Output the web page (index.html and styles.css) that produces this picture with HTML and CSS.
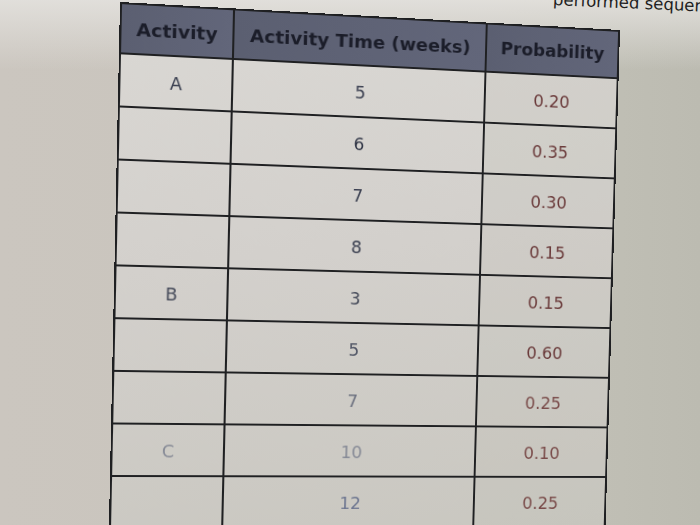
FILE: index.html
```html
<!DOCTYPE html>
<html>
<head>
<meta charset="utf-8">
<link rel="stylesheet" href="styles.css">
</head>
<body>
<div class="caption"><span>performed sequentially</span></div>
<div class="sheet">
  <table class="grid">
    <thead>
      <tr>
        <th class="c1">Activity</th>
        <th class="c2">Activity Time (weeks)</th>
        <th class="c3">Probability</th>
      </tr>
    </thead>
    <tbody>
      <tr class="r1"><td>A</td><td>5</td><td class="p">0.20</td></tr>
      <tr class="r2"><td></td><td>6</td><td class="p">0.35</td></tr>
      <tr class="r3"><td></td><td>7</td><td class="p">0.30</td></tr>
      <tr class="r4"><td></td><td>8</td><td class="p">0.15</td></tr>
      <tr class="r5"><td>B</td><td>3</td><td class="p">0.15</td></tr>
      <tr class="r6"><td></td><td>5</td><td class="p">0.60</td></tr>
      <tr class="r7"><td></td><td>7</td><td class="p">0.25</td></tr>
      <tr class="r8"><td>C</td><td>10</td><td class="p">0.10</td></tr>
      <tr class="r9"><td></td><td>12</td><td class="p">0.25</td></tr>
    </tbody>
  </table>
</div>
</body>
</html>
```
FILE: styles.css
```css
html, body {
  margin: 0;
  padding: 0;
}
body {
  width: 700px;
  height: 525px;
  overflow: hidden;
  font-family: "DejaVu Sans", Verdana, sans-serif;
  background:
    linear-gradient(to bottom, rgba(226,224,220,0.95) 0px, rgba(226,224,220,0) 70px),
    linear-gradient(to right, #cbc6bf 0%, #c8c4bc 55%, #c0bfb5 85%, #bcbbb1 100%);
}
.caption {
  height: 14px;
  margin-bottom: -12px;
  padding-left: 553px;
  overflow: hidden;
  white-space: nowrap;
  font-size: 16.5px;
  line-height: 20px;
  color: #1e1e22;
}
.caption span {
  display: block;
  margin-top: -10px;
  transform-origin: 0 50%;
  transform: rotate(2.5deg);
}
.sheet {
  margin-left: 120px;
  width: 500px;
  transform-origin: 0 0 0;
  transform: matrix3d(1.0603856, 0.0593816, 0, 0.000120771, -0.0212131, 1.005499, 0, 0.00001604, 0, 0, 1, 0, 0, 0, 0, 1);
}
.grid {
  width: 500px;
  border-collapse: collapse;
  table-layout: fixed;
  background: linear-gradient(172deg, #dad8d4 0%, #d3d0cc 45%, #c9c7c0 100%);
}
.grid th, .grid td {
  border: 2px solid #1f2022;
  text-align: center;
  vertical-align: middle;
  padding: 0;
}
.grid th {
  height: 48px;
  font-size: 18px;
  font-weight: bold;
  color: #1b1d29;
  background: linear-gradient(to right, #5b5f71, #62667a);
}
.grid .c1 { width: 21.5%; }
.grid .c2 { width: 50.9%; }
.grid .c3 { width: 27.6%; }
.grid th.c3 { font-size: 17.5px; }
.grid td {
  height: 48px;
  padding-top: 3px;
  font-size: 17px;
  color: #3a3f50;
}
.grid td.p {
  color: #6a3a3a;
}
.grid td:nth-child(3) { background: rgba(190,188,178,0.18); }
.r2 td { color: #2f3445; }
.r5 td { color: #464b5a; }
.r6 td { color: #4f5464; }
.r7 td { color: #6a6f7e; }
.r8 td { color: #868a96; }
.r9 td { color: #6d7690; }
.r7 td.p, .r8 td.p, .r9 td.p { color: #7a4c4a; }
```
